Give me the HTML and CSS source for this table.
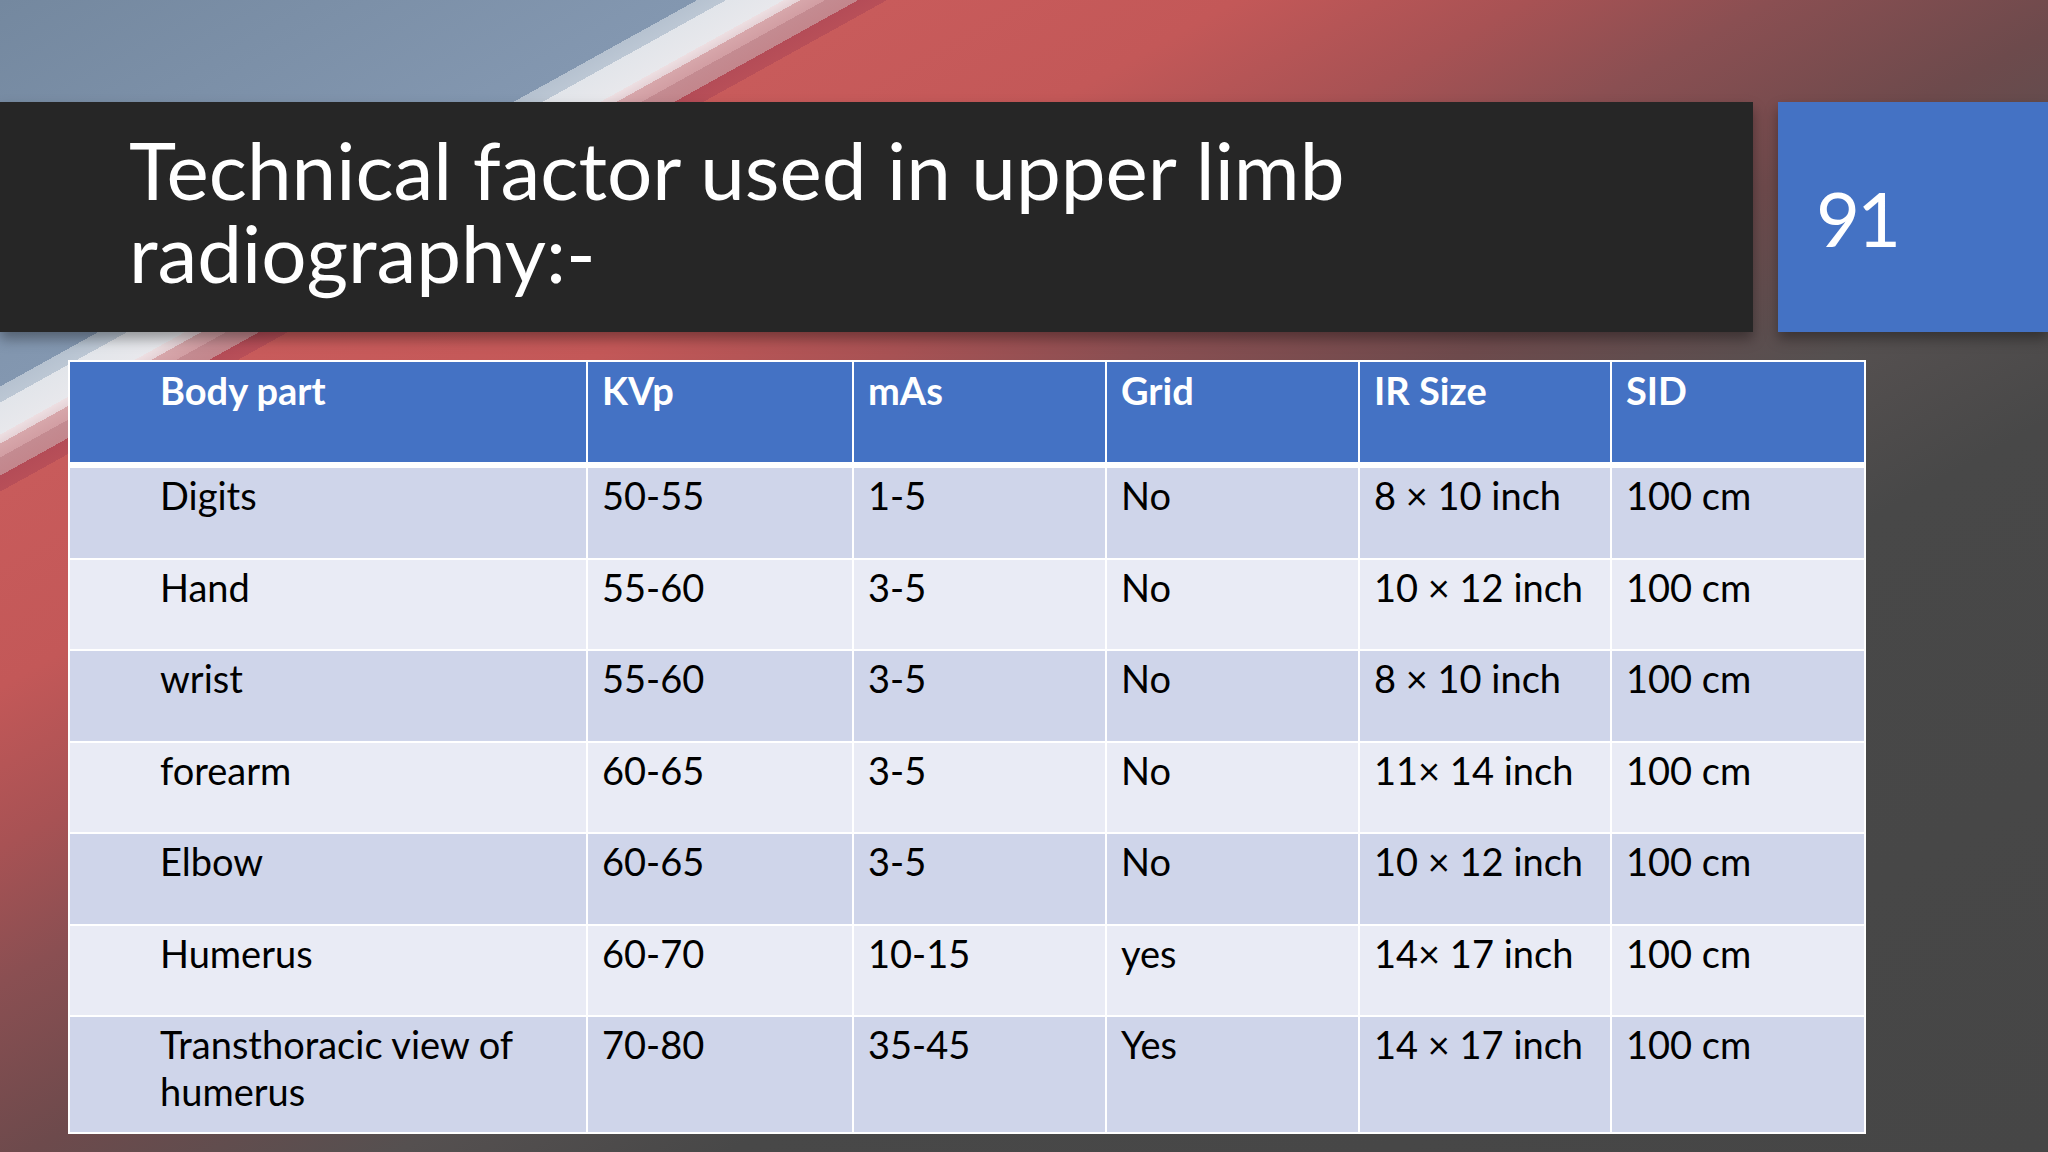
FILE: index.html
```html
<!DOCTYPE html>
<html lang="en">
<head>
<meta charset="utf-8">
<title>Technical factor used in upper limb radiography</title>
<link rel="stylesheet" href="styles.css">
</head>
<body>
<div class="slide">
  <header class="top">
    <div class="title-bar">
      <h1 class="title">Technical factor used in upper limb<br>radiography:-</h1>
    </div>
    <div class="slide-num">91</div>
  </header>

  <table class="factors">
    <colgroup>
      <col class="c-part">
      <col class="c-kvp">
      <col class="c-std">
      <col class="c-std">
      <col class="c-ir">
      <col class="c-sid">
    </colgroup>
    <thead>
      <tr>
        <th class="first">Body part</th>
        <th>KVp</th>
        <th>mAs</th>
        <th>Grid</th>
        <th>IR Size</th>
        <th>SID</th>
      </tr>
    </thead>
    <tbody>
      <tr class="odd">
        <td class="first">Digits</td><td>50-55</td><td>1-5</td><td>No</td><td>8 × 10 inch</td><td>100 cm</td>
      </tr>
      <tr class="even">
        <td class="first">Hand</td><td>55-60</td><td>3-5</td><td>No</td><td>10 × 12 inch</td><td>100 cm</td>
      </tr>
      <tr class="odd">
        <td class="first">wrist</td><td>55-60</td><td>3-5</td><td>No</td><td>8 × 10 inch</td><td>100 cm</td>
      </tr>
      <tr class="even">
        <td class="first">forearm</td><td>60-65</td><td>3-5</td><td>No</td><td>11× 14 inch</td><td>100 cm</td>
      </tr>
      <tr class="odd">
        <td class="first">Elbow</td><td>60-65</td><td>3-5</td><td>No</td><td>10 × 12 inch</td><td>100 cm</td>
      </tr>
      <tr class="even">
        <td class="first">Humerus</td><td>60-70</td><td>10-15</td><td>yes</td><td>14× 17 inch</td><td>100 cm</td>
      </tr>
      <tr class="odd last">
        <td class="first">Transthoracic view of humerus</td><td>70-80</td><td>35-45</td><td>Yes</td><td>14 × 17 inch</td><td>100 cm</td>
      </tr>
    </tbody>
  </table>
</div>
</body>
</html>
```
FILE: styles.css
```css
html, body {
  margin: 0;
  padding: 0;
}

body {
  width: 2048px;
  height: 1152px;
  overflow: hidden;
  font-family: Lato, "Open Sans", "Noto Sans", sans-serif;
}

.slide {
  width: 2048px;
  height: 1152px;
  box-sizing: border-box;
  padding-top: 102px;
  overflow: hidden;
  background:
    linear-gradient(151deg,
      #74889f 0%,
      #8397b0 16.9%,
      #b6c2d0 16.9%,
      #bcc7d4 17.6%,
      #e2e5ea 17.6%,
      #e8e8ec 19%,
      #eddfe2 19%,
      #e6d2d6 19.4%,
      #d7a7ab 19.4%,
      #d29ea3 20%,
      #c48b91 20%,
      #c3868c 20.8%,
      #b44c57 20.8%,
      #b84f58 21.5%,
      #c85b5b 21.5%,
      #c35858 30%,
      #a85254 37%,
      #8a4f52 43%,
      #6d4a4c 51%,
      #555050 60%,
      #484848 68%,
      #464646 100%);
}

/* ---------- header ---------- */
.top {
  display: flex;
  gap: 25px;
  height: 230px;
}

.title-bar {
  width: 1753px;
  flex: none;
  box-sizing: border-box;
  padding: 26px 0 0 129px;
  background: #262626;
  box-shadow: 0 7px 12px rgba(0, 0, 0, 0.35);
}

.title {
  margin: 0;
  color: #ffffff;
  font-weight: 400;
  font-size: 80px;
  line-height: 83px;
}

.slide-num {
  flex: 1;
  box-sizing: border-box;
  padding: 78px 0 0 38px;
  background: #4472c4;
  color: #ffffff;
  font-size: 76px;
  line-height: 76px;
  letter-spacing: -3px;
  box-shadow: 0 7px 12px rgba(0, 0, 0, 0.35);
}

/* ---------- table ---------- */
.factors {
  margin: 28px 0 0 68px;
  width: 1796px;
  table-layout: fixed;
  border-collapse: collapse;
  border: 2px solid #ffffff;
  font-size: 38px;
  line-height: 47px;
}

.c-part { width: 518px; }
.c-kvp  { width: 266px; }
.c-std  { width: 253px; }
.c-ir   { width: 252px; }
.c-sid  { width: 254px; }

.factors th,
.factors td {
  border: 2px solid #ffffff;
  text-align: left;
  vertical-align: top;
  padding: 4px 10px 38.5px 14px;
}

.factors th {
  background: #4472c4;
  color: #ffffff;
  font-weight: 700;
  padding-top: 5px;
  padding-bottom: 48px;
  border-bottom: 6px solid #ffffff;
}

.factors td {
  color: #000000;
  font-weight: 400;
}

.factors .first {
  padding-left: 90px;
}

.odd td {
  background: #cfd5ea;
}

.even td {
  background: #e9ebf5;
}

.last td {
  padding-bottom: 17px;
}
```
